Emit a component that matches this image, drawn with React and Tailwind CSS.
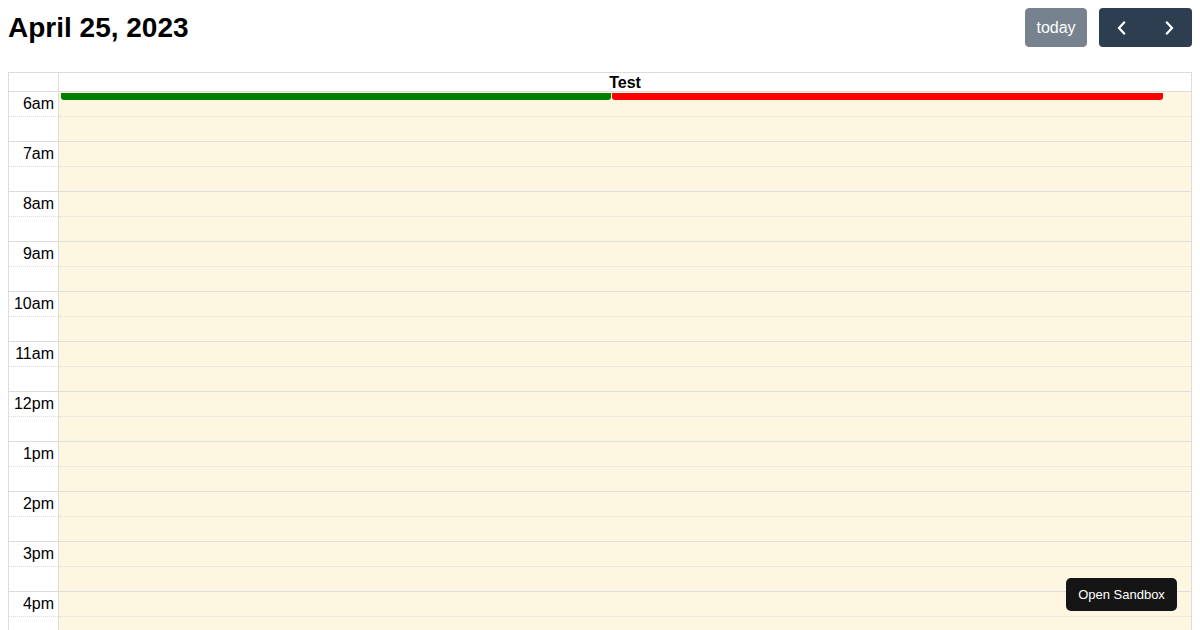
import React from 'react';

const hours = ['6am', '7am', '8am', '9am', '10am', '11am', '12pm', '1pm', '2pm', '3pm', '4pm'];

function ChevronLeft() {
    return (
        <svg width="16" height="16" viewBox="0 0 16 16" fill="none" stroke="currentColor" strokeWidth="2.2">
            <polyline points="10.8,1.8 5,8 10.8,14.2" />
        </svg>
    );
}

function ChevronRight() {
    return (
        <svg width="16" height="16" viewBox="0 0 16 16" fill="none" stroke="currentColor" strokeWidth="2.2">
            <polyline points="5.2,1.8 11,8 5.2,14.2" />
        </svg>
    );
}

function App() {
    return (
        <div className="h-screen overflow-hidden bg-white p-2 font-['Liberation_Sans',Arial,sans-serif] text-black">
            {/* Toolbar */}
            <div className="flex items-center justify-between mb-[25px]">
                <h2 className="text-[28px] font-bold leading-[39px]">April 25, 2023</h2>
                <div className="flex items-center gap-3">
                    <button className="h-[39px] px-[10.4px] rounded bg-[#76828d] border border-[#76828d] text-white text-base">
                        today
                    </button>
                    <div className="flex h-[39px] rounded bg-[#2c3e50] text-white">
                        <button className="w-[46px] flex items-center justify-center">
                            <ChevronLeft />
                        </button>
                        <button className="w-[47px] flex items-center justify-center">
                            <ChevronRight />
                        </button>
                    </div>
                </div>
            </div>

            {/* Calendar grid */}
            <div className="border-t border-l border-r border-[#ddd]">
                <div className="flex border-b border-[#ddd]">
                    <div className="w-[50px] border-r border-[#ddd]" />
                    <div className="flex-1 h-[18px] pt-px text-center text-base font-bold leading-[18px]">Test</div>
                </div>

                <div className="flex">
                    <div className="w-[50px] border-r border-[#ddd]">
                        {hours.map((h) => (
                            <React.Fragment key={h}>
                                <div className="h-[25px] border-b border-dotted border-[#ddd] flex items-center justify-end pr-1 text-base leading-none">
                                    {h}
                                </div>
                                <div className="h-[25px] border-b border-[#ddd]" />
                            </React.Fragment>
                        ))}
                    </div>
                    <div className="relative flex-1 bg-[#fdf7e2]">
                        {hours.map((h) => (
                            <React.Fragment key={h}>
                                <div className="h-[25px] border-b border-dotted border-[#ddd]" />
                                <div className="h-[25px] border-b border-[#ddd]" />
                            </React.Fragment>
                        ))}
                        {/* Events */}
                        <div className="absolute top-[1px] left-[2px] right-[2.5%] flex gap-px">
                            <div className="flex-1 h-[7px] bg-[#008000] rounded-b-[3px]" />
                            <div className="flex-1 h-[7px] bg-[#ff0000] rounded-b-[3px]" />
                        </div>
                    </div>
                </div>
            </div>

            {/* Sandbox overlay button */}
            <button className="fixed bottom-[19px] right-[23px] w-[111px] h-[33px] rounded-[5px] bg-[#151515] text-white text-[13px]">
                Open Sandbox
            </button>
        </div>
    );
}

export default App;
